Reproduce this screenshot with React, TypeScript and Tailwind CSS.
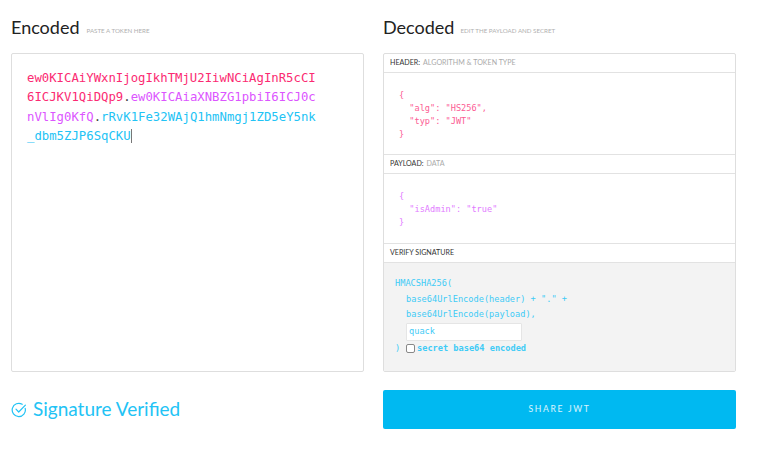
const sans = "font-['Lato','Liberation_Sans',sans-serif]";
const mono = "font-['DejaVu_Sans_Mono',monospace]";

function PanelTitle({ title, hint, hintClass }: { title: string; hint: string; hintClass: string }) {
  return (
    <div className={`flex h-[53px] items-start pt-[16px] ${sans}`}>
      <h2 className="text-[18px] leading-[22px] text-[#222]">{title}</h2>
      <span className={`mt-[10px] text-[6.2px] leading-[10px] text-[#b0b0b0] uppercase ${hintClass}`}>{hint}</span>
    </div>
  );
}

function SectionHead({ label, hint }: { label: string; hint?: string }) {
  return (
    <div className={`flex h-[19px] items-center border-b border-[#e2e2e2] pl-[6px] text-[7.1px] uppercase ${sans}`}>
      <span className="text-[#333]">{label}</span>
      {hint && <span className="ml-[3px] text-[#aaa]">{hint}</span>}
    </div>
  );
}

export default function App() {
  return (
    <div className="h-[463px] w-[768px] overflow-hidden bg-white pl-[11px]">
      <div className="grid grid-cols-[353px_353px] gap-x-[19px]">
        <section>
          <PanelTitle title="Encoded" hint="Paste a token here" hintClass="ml-[7px]" />
          <div className={`h-[319px] rounded-[2px] border border-[#dedede] pl-[15px] pt-[15px] text-[12.3px] leading-[19.4px] ${mono}`}>
            <div className="text-[#fb2a72]">ew0KICAiYWxnIjogIkhTMjU2IiwNCiAgInR5cCI</div>
            <div>
              <span className="text-[#fb2a72]">6ICJKV1QiDQp9</span>
              <span className="text-[#444]">.</span>
              <span className="text-[#dc55ff]">ew0KICAiaXNBZG1pbiI6ICJ0c</span>
            </div>
            <div>
              <span className="text-[#dc55ff]">nVlIg0KfQ</span>
              <span className="text-[#444]">.</span>
              <span className="text-[#22c3f5]">rRvK1Fe32WAjQ1hmNmgj1ZD5eY5nk</span>
            </div>
            <div>
              <span className="border-r border-[#777] text-[#22c3f5]">_dbm5ZJP6SqCKU</span>
            </div>
          </div>
        </section>

        <section>
          <PanelTitle title="Decoded" hint="Edit the payload and secret" hintClass="ml-[6px]" />
          <div className="flex h-[319px] flex-col rounded-[2px] border border-[#dedede]">
            <SectionHead label="Header:" hint="Algorithm & token type" />
            <pre className={`h-[82px] border-b border-[#e2e2e2] pl-[15px] pt-[16px] text-[8.6px] leading-[13px] text-[#fc5c94] ${mono}`}>
              {'{\n  "alg": "HS256",\n  "typ": "JWT"\n}'}
            </pre>
            <SectionHead label="Payload:" hint="Data" />
            <pre className={`h-[70px] border-b border-[#e2e2e2] pl-[15px] pt-[16px] text-[8.6px] leading-[13px] text-[#e27bff] ${mono}`}>
              {'{\n  "isAdmin": "true"\n}'}
            </pre>
            <SectionHead label="Verify signature" />
            <div className={`flex-1 bg-[#f3f3f3] pl-[11px] pt-[13px] text-[8.65px] leading-[15.5px] text-[#3fcbf6] ${mono}`}>
              <div>HMACSHA256(</div>
              <div className="pl-[11px]">base64UrlEncode(header) + "." +</div>
              <div className="pl-[11px]">base64UrlEncode(payload),</div>
              <div className="pl-[11px]">
                <div className="flex h-[18px] w-[116px] items-center rounded-[1px] border border-[#e5e5e5] bg-white pl-[2px]">quack</div>
              </div>
              <div className="flex items-center">
                <span className="w-[11px]">)</span>
                <input type="checkbox" className="m-0 h-[9px] w-[9px] appearance-none rounded-[2px] border border-[#888] bg-white" />
                <span className="ml-[2px] font-bold">secret base64 encoded</span>
              </div>
            </div>
          </div>
        </section>

        <div className={`mt-[18px] flex h-[39px] items-center ${sans}`}>
          <svg width="16" height="16" viewBox="0 0 16 16" fill="none" stroke="#22c3f5" strokeWidth="1.2" strokeLinecap="round" strokeLinejoin="round">
            <path d="M14.2 6.4A6.6 6.6 0 1 1 11.2 2.3" />
            <path d="M5 7.2 7.7 10 14.4 3.2" />
          </svg>
          <span className="ml-[6px] text-[19px] text-[#22c3f5]">Signature Verified</span>
        </div>
        <button type="button" className={`mt-[18px] h-[39px] rounded-[2px] bg-[#00b9f1] text-[8.6px] tracking-[1.7px] text-white/85 uppercase ${sans}`}>
          Share JWT
        </button>
      </div>
    </div>
  );
}
